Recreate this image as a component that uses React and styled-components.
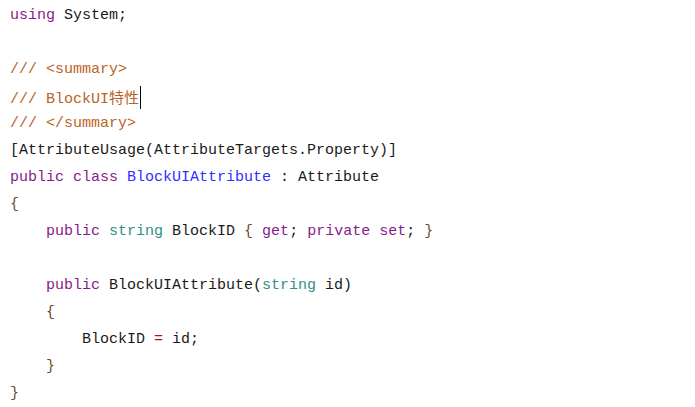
import React from "react";
import styled, { createGlobalStyle } from "styled-components";

const Global = createGlobalStyle`
  html, body { margin: 0; padding: 0; background: #ffffff; }
`;

const Editor = styled.pre`
  margin: 0;
  padding: 2px 0 0 10px;
  font-family: "Liberation Mono", "Courier New", "Noto Sans CJK SC", monospace;
  font-size: 15px;
  line-height: 27px;
  color: #1a1a1a;
  background: #ffffff;
  white-space: pre;
`;

const Line = styled.div`
  height: 27px;
  padding-left: ${(p) => (p.$indent || 0) * 9}px;
`;

const colors = {
  kw: "#8a1a8c",
  cm: "#b8651f",
  cls: "#2f2fff",
  ty: "#2e8f88",
  op: "#b01818",
  br: "#6e4a28",
};

const Tok = styled.span`
  color: ${(p) => colors[p.$k] || "#1a1a1a"};
`;

const Cjk = styled.span`
  font-family: "Noto Sans CJK SC", sans-serif;
  color: ${colors.cm};
`;

const Caret = styled.span`
  display: inline-block;
  width: 1px;
  height: 23px;
  background: #000;
  vertical-align: -6px;
  margin-left: 1px;
`;

export default function App() {
  return (
    <>
      <Global />
      <Editor>
        <Line>
          <Tok $k="kw">using</Tok> System;
        </Line>
        <Line />
        <Line>
          <Tok $k="cm">/// &lt;summary&gt;</Tok>
        </Line>
        <Line>
          <Tok $k="cm">/// BlockUI</Tok>
          <Cjk>特性</Cjk>
          <Caret />
        </Line>
        <Line>
          <Tok $k="cm">/// &lt;/summary&gt;</Tok>
        </Line>
        <Line>[AttributeUsage(AttributeTargets.Property)]</Line>
        <Line>
          <Tok $k="kw">public</Tok> <Tok $k="kw">class</Tok>{" "}
          <Tok $k="cls">BlockUIAttribute</Tok> : Attribute
        </Line>
        <Line>
          <Tok $k="br">{"{"}</Tok>
        </Line>
        <Line $indent={4}>
          <Tok $k="kw">public</Tok> <Tok $k="ty">string</Tok> BlockID{" "}
          <Tok $k="br">{"{"}</Tok> <Tok $k="kw">get</Tok>;{" "}
          <Tok $k="kw">private</Tok> <Tok $k="kw">set</Tok>;{" "}
          <Tok $k="br">{"}"}</Tok>
        </Line>
        <Line />
        <Line $indent={4}>
          <Tok $k="kw">public</Tok> BlockUIAttribute(<Tok $k="ty">string</Tok> id)
        </Line>
        <Line $indent={4}>
          <Tok $k="br">{"{"}</Tok>
        </Line>
        <Line $indent={8}>
          BlockID <Tok $k="op">=</Tok> id;
        </Line>
        <Line $indent={4}>
          <Tok $k="br">{"}"}</Tok>
        </Line>
        <Line>
          <Tok $k="br">{"}"}</Tok>
        </Line>
      </Editor>
    </>
  );
}
